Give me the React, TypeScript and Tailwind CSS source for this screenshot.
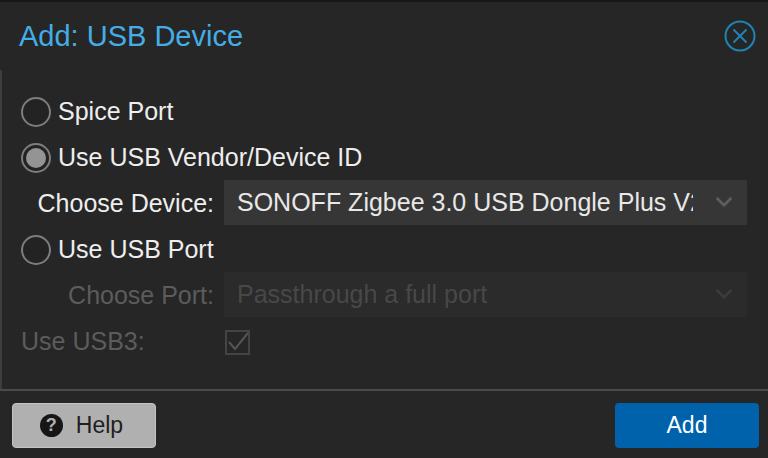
import { ChevronDown } from 'lucide-react';

function Radio({ checked, label }: { checked?: boolean; label: string }) {
  return (
    <div className="flex items-center h-[46px]">
      <div className="w-[30px] h-[30px] rounded-full border-[2px] border-[#7d7d7d] bg-[#232323] flex items-center justify-center flex-shrink-0">
        {checked && <div className="w-[20px] h-[20px] rounded-full bg-[#949494]" />}
      </div>
      <span className="ml-[7px] text-[25px] text-[#eeeeee]">{label}</span>
    </div>
  );
}

function Select({ value, disabled }: { value: string; disabled?: boolean }) {
  return (
    <div className={`flex items-center w-[523px] h-[45px] pl-[13px] pr-[10px] mb-[4px] ${disabled ? 'bg-[#2b2b2b]' : 'bg-[#363636]'}`}>
      <span className={`w-[456px] pt-[2px] overflow-hidden whitespace-nowrap text-[25px] ${disabled ? 'text-[#484848]' : 'text-[#e8e8e8]'}`}>{value}</span>
      <ChevronDown className={`ml-auto w-[26px] h-[26px] flex-shrink-0 ${disabled ? 'text-[#3c3c3c]' : 'text-[#5e5e5e]'}`} strokeWidth={2.5} />
    </div>
  );
}

export default function App() {
  return (
    <div className="w-[768px] h-[458px] flex flex-col overflow-hidden bg-[#262626] font-['Liberation_Sans',Arial,sans-serif] border-t-[2px] border-t-[#181818]">
      {/* Header */}
      <div className="flex items-center justify-between h-[68px] pl-[19px] pr-[12px]">
        <span className="pt-[2px] text-[29px] text-[#45ade6]">Add: USB Device</span>
        <svg width="32" height="32" viewBox="0 0 32 32" fill="none" className="text-[#1f84b5]">
          <circle cx="16" cy="16" r="14.5" stroke="currentColor" strokeWidth="2" />
          <path d="M9.5 9.5L22.5 22.5M22.5 9.5L9.5 22.5" stroke="currentColor" strokeWidth="2" />
        </svg>
      </div>

      {/* Form */}
      <div className="flex-1 pt-[19px] pl-[19px] border-l-[2px] border-l-[#3d3d3d]">
        <Radio label="Spice Port" />
        <Radio label="Use USB Vendor/Device ID" checked />
        <div className="flex items-center h-[46px]">
          <span className="w-[193px] text-right text-[25px] text-[#eeeeee]">Choose Device:</span>
          <div className="ml-[10px]">
            <Select value="SONOFF Zigbee 3.0 USB Dongle Plus V2" />
          </div>
        </div>
        <Radio label="Use USB Port" />
        <div className="flex items-center h-[46px]">
          <span className="w-[193px] text-right text-[25px] text-[#5c5c5c]">Choose Port:</span>
          <div className="ml-[10px]">
            <Select value="Passthrough a full port" disabled />
          </div>
        </div>
        <div className="flex items-center h-[46px]">
          <span className="w-[204px] text-[25px] text-[#5c5c5c]">Use USB3:</span>
          <div className="w-[25px] h-[25px] border-[2px] border-[#444444] flex items-center justify-center">
            <svg width="21" height="21" viewBox="0 0 21 21" fill="none">
              <path d="M2 10L8 17L21 1" stroke="#555555" strokeWidth="2" />
            </svg>
          </div>
        </div>
      </div>

      {/* Footer */}
      <div className="flex items-center justify-between h-[69px] pl-[12px] pr-[9px] pt-[2px] border-t-[2px] border-t-[#4a4a4a]">
        <button className="flex items-center justify-center gap-[13px] w-[144px] h-[45px] pr-[5px] rounded-[4px] bg-[#b0b0b0] border border-[#c4c4c4] text-[#1e1e1e] text-[23px]">
          <span className="w-[23px] h-[23px] rounded-full bg-[#161616] text-[#b0b0b0] text-[18px] font-bold leading-[23px] text-center">?</span>
          Help
        </button>
        <button className="w-[144px] h-[45px] rounded-[4px] bg-[#0062ab] text-white text-[23px]">Add</button>
      </div>
    </div>
  );
}
